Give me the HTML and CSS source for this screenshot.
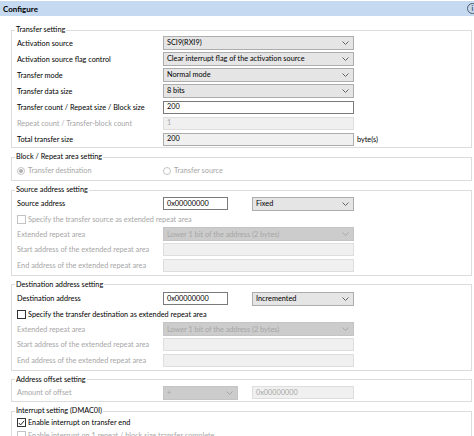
FILE: index.html
```html
<!DOCTYPE html>
<html lang="en">
<head>
    <meta charset="UTF-8">
    <title>Configure</title>
    <link rel="stylesheet" href="styles.css">
</head>
<body>

    <div class="titlebar">
        <span class="title">Configure</span>
        <span class="info-icon">i</span>
    </div>

    <fieldset class="group main">
        <legend>Transfer setting</legend>
        <div class="row">
            <span class="label">Activation source</span>
            <div class="combo wide"><span>SCI9(RXI9)</span><svg class="chev" width="7" height="4" viewBox="0 0 7 4"><polyline points="0.5,0.5 3.5,3.5 6.5,0.5"/></svg></div>
        </div>
        <div class="row">
            <span class="label">Activation source flag control</span>
            <div class="combo wide"><span>Clear interrupt flag of the activation source</span><svg class="chev" width="7" height="4" viewBox="0 0 7 4"><polyline points="0.5,0.5 3.5,3.5 6.5,0.5"/></svg></div>
        </div>
        <div class="row">
            <span class="label">Transfer mode</span>
            <div class="combo wide"><span>Normal mode</span><svg class="chev" width="7" height="4" viewBox="0 0 7 4"><polyline points="0.5,0.5 3.5,3.5 6.5,0.5"/></svg></div>
        </div>
        <div class="row">
            <span class="label">Transfer data size</span>
            <div class="combo wide"><span>8 bits</span><svg class="chev" width="7" height="4" viewBox="0 0 7 4"><polyline points="0.5,0.5 3.5,3.5 6.5,0.5"/></svg></div>
        </div>
        <div class="row">
            <span class="label">Transfer count / Repeat size / Block size</span>
            <div class="field wide">200</div>
        </div>
        <div class="row disabled">
            <span class="label">Repeat count / Transfer-block count</span>
            <div class="field wide">1</div>
        </div>
        <div class="row">
            <span class="label">Total transfer size</span>
            <div class="field wide readonly">200</div>
            <span class="unit">byte(s)</span>
        </div>
    </fieldset>

    <fieldset class="group">
        <legend>Block / Repeat area setting</legend>
        <div class="row radios disabled">
            <span class="radio-item first"><span class="radio checked"></span>Transfer destination</span>
            <span class="radio-item"><span class="radio"></span>Transfer source</span>
        </div>
    </fieldset>

    <fieldset class="group">
        <legend>Source address setting</legend>
        <div class="row">
            <span class="label">Source address</span>
            <div class="field short">0x00000000</div>
            <div class="combo mid"><span>Fixed</span><svg class="chev" width="7" height="4" viewBox="0 0 7 4"><polyline points="0.5,0.5 3.5,3.5 6.5,0.5"/></svg></div>
        </div>
        <div class="row disabled">
            <span class="checkbox"></span>
            <span>Specify the transfer source as extended repeat area</span>
        </div>
        <div class="row disabled">
            <span class="label">Extended repeat area</span>
            <div class="combo wide"><span>Lower 1 bit of the address (2 bytes)</span><svg class="chev" width="7" height="4" viewBox="0 0 7 4"><polyline points="0.5,0.5 3.5,3.5 6.5,0.5"/></svg></div>
        </div>
        <div class="row disabled">
            <span class="label">Start address of the extended repeat area</span>
            <div class="field wide"></div>
        </div>
        <div class="row disabled">
            <span class="label">End address of the extended repeat area</span>
            <div class="field wide"></div>
        </div>
    </fieldset>

    <fieldset class="group">
        <legend>Destination address setting</legend>
        <div class="row">
            <span class="label">Destination address</span>
            <div class="field short">0x00000000</div>
            <div class="combo mid"><span>Incremented</span><svg class="chev" width="7" height="4" viewBox="0 0 7 4"><polyline points="0.5,0.5 3.5,3.5 6.5,0.5"/></svg></div>
        </div>
        <div class="row">
            <span class="checkbox"></span>
            <span>Specify the transfer destination as extended repeat area</span>
        </div>
        <div class="row disabled">
            <span class="label">Extended repeat area</span>
            <div class="combo wide"><span>Lower 1 bit of the address (2 bytes)</span><svg class="chev" width="7" height="4" viewBox="0 0 7 4"><polyline points="0.5,0.5 3.5,3.5 6.5,0.5"/></svg></div>
        </div>
        <div class="row disabled">
            <span class="label">Start address of the extended repeat area</span>
            <div class="field wide"></div>
        </div>
        <div class="row disabled">
            <span class="label">End address of the extended repeat area</span>
            <div class="field wide"></div>
        </div>
    </fieldset>

    <fieldset class="group offset">
        <legend>Address offset setting</legend>
        <div class="row disabled">
            <span class="label">Amount of offset</span>
            <div class="combo sign"><span>+</span><svg class="chev" width="7" height="4" viewBox="0 0 7 4"><polyline points="0.5,0.5 3.5,3.5 6.5,0.5"/></svg></div>
            <div class="field mid">0x00000000</div>
        </div>
    </fieldset>

    <fieldset class="group interrupt">
        <legend>Interrupt setting (DMAC0I)</legend>
        <div class="row">
            <span class="checkbox checked"><svg width="8" height="8" viewBox="0 0 8 8"><polyline points="1,4 3,6.2 7,1.5"/></svg></span>
            <span>Enable interrupt on transfer end</span>
        </div>
        <div class="row disabled">
            <span class="checkbox"></span>
            <span>Enable interrupt on 1 repeat / block size transfer complete</span>
        </div>
    </fieldset>

</body>
</html>
```

FILE: styles.css
```css
body {
    font-family: Lato, 'Segoe UI', sans-serif;
    font-size: 7.3px;
    background-color: #fff;
    color: #000;
    margin: 0;
    padding: 0;
    width: 474px;
    height: 436px;
    overflow: hidden;
}

.titlebar {
    display: flex;
    align-items: center;
    height: 15px;
    margin-top: 1px;
    padding-left: 3px;
    background-color: #c5daf0;
    overflow: hidden;
}

.title {
    font-size: 8px;
    font-weight: bold;
    line-height: 1;
}

.info-icon {
    margin-left: auto;
    margin-right: -4px;
    width: 9px;
    height: 9px;
    border: 1px solid #4a5a6a;
    border-radius: 50%;
    font-size: 7px;
    line-height: 9px;
    text-align: center;
    font-weight: bold;
    color: #4a5a6a;
}

.group {
    margin: 4px 2px 0 11px;
    padding: 1px 5px 2px 5px;
    border: 1px solid #dcdcdc;
    min-width: 0;
}

.group legend {
    padding: 0 1px;
    margin-left: -2px;
    line-height: 10px;
}

.main {
    margin-top: 9px;
    padding-top: 0;
    padding-bottom: 0;
}

.row {
    display: flex;
    align-items: center;
    height: 15.4px;
    white-space: nowrap;
}

.main .row {
    height: 16px;
}

.label {
    width: 146px;
    flex: none;
}

.disabled {
    color: #a6a6a6;
}

.combo, .field {
    box-sizing: border-box;
    height: 14px;
    display: flex;
    align-items: center;
    line-height: 1;
    overflow: hidden;
}

.combo {
    justify-content: space-between;
    padding: 0 4px 0 3px;
    border: 1px solid #adadad;
    background-color: #e5e5e5;
}

.chev {
    flex: none;
    fill: none;
    stroke: #666;
    stroke-width: 1;
}

.field {
    height: 13px;
    padding: 0 3px;
    border: 1px solid #7a7a7a;
    background-color: #fff;
}

.wide {
    width: 191px;
}

.short {
    width: 65px;
}

.mid {
    width: 102px;
    margin-left: 24px;
}

.sign {
    width: 75px;
}

.offset .mid {
    margin-left: 14px;
}

.field.readonly {
    background-color: #f0f0f0;
    border-color: #adadad;
}

.disabled .field {
    background-color: #f0f0f0;
    border-color: #dedede;
}

.disabled .combo {
    background-color: #cccccc;
    border-color: #c4c4c4;
}

.disabled .chev {
    stroke: #a8a8a8;
}

.unit {
    margin-left: 3px;
}

.radios {
    height: 15px;
}

.radio-item {
    display: flex;
    align-items: center;
}

.radio-item.first {
    width: 146px;
}

.radio {
    box-sizing: border-box;
    width: 8px;
    height: 8px;
    margin-right: 3px;
    border: 1px solid #c4c4c4;
    border-radius: 50%;
    display: flex;
    align-items: center;
    justify-content: center;
}

.radio.checked::after {
    content: "";
    width: 4px;
    height: 4px;
    border-radius: 50%;
    background-color: #b0b0b0;
}

.checkbox {
    box-sizing: border-box;
    flex: none;
    width: 9px;
    height: 9px;
    margin-right: 2px;
    border: 1px solid #333;
    background-color: #fff;
    display: flex;
    align-items: center;
    justify-content: center;
}

.checkbox svg {
    fill: none;
    stroke: #222;
    stroke-width: 1.1;
}

.disabled .checkbox {
    border-color: #c4c4c4;
}

.offset {
    padding-top: 0;
    padding-bottom: 1px;
}

.interrupt {
    padding-top: 0;
}

.interrupt .row {
    height: 12.5px;
}
```
